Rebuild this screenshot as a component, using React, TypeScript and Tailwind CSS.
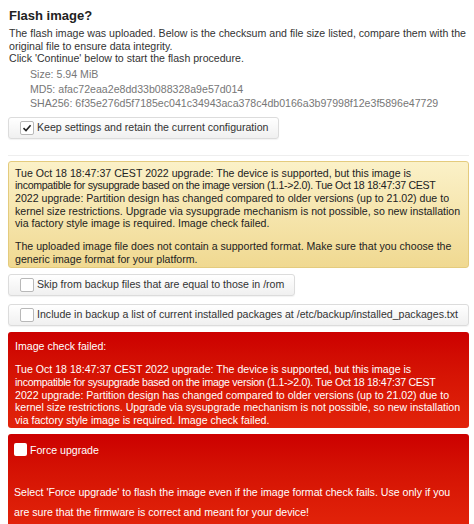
import React from 'react';

const Box: React.FC<{ checked?: boolean }> = ({ checked }) => (
  <span className="inline-flex h-[14px] w-[14px] shrink-0 items-center justify-center rounded-[2px] border border-[#b8b8b8] bg-white">
    {checked && (
      <svg width="10" height="10" viewBox="0 0 10 10">
        <path d="M1.5 5.2 L4 7.6 L8.6 2.2" fill="none" stroke="#222" strokeWidth="1.6" />
      </svg>
    )}
  </span>
);

const Option: React.FC<{ label: string; checked?: boolean }> = ({ label, checked }) => (
  <div className="flex h-[22px] items-center gap-[3px] self-start rounded-[3px] border border-[#dcdcdc] bg-gradient-to-b from-white to-[#f0f0f0] pl-[11px] pr-[10px] shadow-[0_1px_1px_rgba(0,0,0,0.05)]">
    <Box checked={checked} />
    <span className="whitespace-nowrap text-[#333]">{label}</span>
  </div>
);

// wrapped the way the reference wraps it
const FailMsg = () => (
  <p className="whitespace-nowrap">
    <span className="block">Tue Oct 18 18:47:37 CEST 2022 upgrade: The device is supported, but this image is</span>
    <span className="block tracking-[-0.3px]">
      incompatible for sysupgrade based on the image version (1.1-&gt;2.0). Tue Oct 18 18:47:37 CEST
    </span>
    <span className="block">
      2022 upgrade: Partition design has changed compared to older versions (up to 21.02) due to
    </span>
    <span className="block">
      kernel size restrictions. Upgrade via sysupgrade mechanism is not possible, so new installation
    </span>
    <span className="block">via factory style image is required. Image check failed.</span>
  </p>
);

export default function App() {
  return (
    <div className="h-[524px] w-[474px] overflow-hidden bg-white pl-[8px] pr-[3px] font-['Liberation_Sans',Arial,sans-serif] text-[10.6px] leading-[12.7px] text-[#333]">
      <h3 className="mt-[6px] pl-[1px] text-[13px] font-bold leading-[20px] text-[#222]">Flash image?</h3>
      <p className="mt-[1px] pl-[1px]">
        The flash image was uploaded. Below is the checksum and file size listed, compare them with the
        original file to ensure data integrity.
        <br />
        Click 'Continue' below to start the flash procedure.
      </p>
      <ul className="mt-[2px] pl-[22px] leading-[14.5px] text-[#777]">
        <li>Size: 5.94 MiB</li>
        <li>MD5: afac72eaa2e8dd33b088328a9e57d014</li>
        <li>SHA256: 6f35e276d5f7185ec041c34943aca378c4db0166a3b97998f12e3f5896e47729</li>
      </ul>
      <div className="mt-[6px] flex flex-col">
        <Option checked label="Keep settings and retain the current configuration" />
      </div>
      <hr className="mt-[16px] mr-[2px] border-[#eee]" />
      <div className="mt-[5px] mr-[2px] rounded-[3px] border border-[#e4cb7d] bg-gradient-to-b from-[#fbf1c8] to-[#f0d991] px-[6px] pt-[5px] pb-[1px] text-[#222]">
        <FailMsg />
        <p className="mt-[10px]">
          The uploaded image file does not contain a supported format. Make sure that you choose the
          <br />
          generic image format for your platform.
        </p>
      </div>
      <div className="mt-[6px] flex flex-col gap-[8px]">
        <Option label="Skip from backup files that are equal to those in /rom" />
        <Option label="Include in backup a list of current installed packages at /etc/backup/installed_packages.txt" />
      </div>
      <div className="mt-[6px] mr-[2px] rounded-[3px] bg-gradient-to-b from-[#cc0000] to-[#e2230a] px-[7px] pt-[8px] pb-[1px] text-white">
        <p>Image check failed:</p>
        <div className="mt-[11px]">
          <FailMsg />
        </div>
      </div>
      <div className="mt-[6px] mr-[2px] rounded-[3px] bg-gradient-to-b from-[#cc0000] to-[#e2230a] px-[6px] pt-[9px] pb-[4px] text-white">
        <div className="flex items-center gap-[3px] leading-[14px]">
          <span className="h-[13px] w-[13px] rounded-[2px] bg-white" />
          <span>Force upgrade</span>
        </div>
        <p className="mt-[25px] leading-[20px]">
          Select 'Force upgrade' to flash the image even if the image format check fails. Use only if you are
          sure that the firmware is correct and meant for your device!
        </p>
      </div>
    </div>
  );
}
